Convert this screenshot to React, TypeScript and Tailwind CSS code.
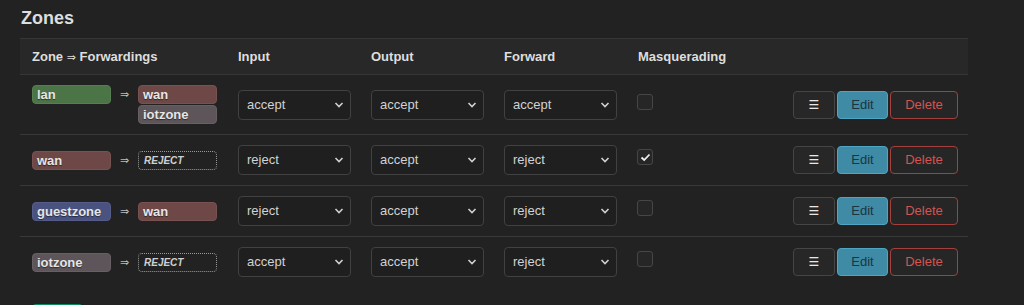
import React from 'react';

interface Zone {
  name: string;
  forwardings: string[];
  input: string;
  output: string;
  forward: string;
  masq: boolean;
}

const zones: Zone[] = [
  { name: 'lan', forwardings: ['wan', 'iotzone'], input: 'accept', output: 'accept', forward: 'accept', masq: false },
  { name: 'wan', forwardings: [], input: 'reject', output: 'accept', forward: 'reject', masq: true },
  { name: 'guestzone', forwardings: ['wan'], input: 'reject', output: 'accept', forward: 'reject', masq: false },
  { name: 'iotzone', forwardings: [], input: 'accept', output: 'accept', forward: 'reject', masq: false },
];

// zone badge colours
const badgeColors: Record<string, string> = {
  lan: 'bg-[#4b7447] border-[#557f50]',
  wan: 'bg-[#6d4846] border-[#785250]',
  guestzone: 'bg-[#4a5380] border-[#545d8a]',
  iotzone: 'bg-[#5d5559] border-[#675f63]',
};

function ZoneBadge({ name }: { name: string }) {
  return (
    <div
      className={`shrink-0 w-[79px] h-[19px] rounded-[4px] border px-[4px] text-[13px] leading-[17px] font-bold text-[#e6e6e6] [text-shadow:0_1px_1px_rgba(0,0,0,0.5)] ${badgeColors[name]}`}
    >
      {name}
    </div>
  );
}

function Select({ value }: { value: string }) {
  return (
    <div className="w-[113px] h-[30px] rounded-[4px] border border-[#414141] bg-[#1f1f1f] flex items-center justify-between pl-[8px] pr-[6px] text-[13px] text-[#d2d2d2]">
      <span>{value}</span>
      <svg width="10" height="8" viewBox="0 0 10 8" fill="none">
        <path d="M1.5 2 L5 5.5 L8.5 2" stroke="#d0d0d0" strokeWidth="1.6" />
      </svg>
    </div>
  );
}

function Checkbox({ checked }: { checked: boolean }) {
  return (
    <div className="w-[16px] h-[16px] mb-[6px] rounded-[3px] border border-[#464646] bg-[#262626] flex items-center justify-center">
      {checked && (
        <svg width="11" height="9" viewBox="0 0 11 9" fill="none">
          <path d="M1.5 4.5 L4.2 7 L9.5 1.5" stroke="#eeeeee" strokeWidth="1.8" />
        </svg>
      )}
    </div>
  );
}

export default function App() {
  return (
    <div className="h-[305px] overflow-hidden bg-[#222222] px-[20px] pt-[8px] font-['Liberation_Sans',Arial,sans-serif] text-[#d8d8d8]">
      <h2 className="text-[18px] leading-[21px] font-bold text-[#dddddd] mb-[9px] ml-[1px]">Zones</h2>

      <table className="w-[948px] table-fixed border-collapse">
        <colgroup>
          <col className="w-[206px]" />
          <col className="w-[133px]" />
          <col className="w-[133px]" />
          <col className="w-[134px]" />
          <col className="w-[150px]" />
          <col />
        </colgroup>
        <thead>
          <tr className="bg-[#282828] border-t border-b border-[#363636]">
            <th className="h-[36px] px-[12px] text-left text-[13px] font-bold text-[#dedede]">
              Zone <span className="font-['DejaVu_Sans',sans-serif] font-normal text-[11px]">⇒</span> Forwardings
            </th>
            <th className="px-[12px] text-left text-[13px] font-bold text-[#dedede]">Input</th>
            <th className="px-[12px] text-left text-[13px] font-bold text-[#dedede]">Output</th>
            <th className="px-[12px] text-left text-[13px] font-bold text-[#dedede]">Forward</th>
            <th className="px-[12px] text-left text-[13px] font-bold text-[#dedede]">Masquerading</th>
            <th></th>
          </tr>
        </thead>
        <tbody>
          {zones.map((z, i) => (
            <tr key={z.name} className={i > 0 ? 'border-t border-[#383838]' : ''}>
              <td className="pl-[12px] pr-[2px] py-[10px] align-middle">
                <div className="flex items-start">
                  <ZoneBadge name={z.name} />
                  <span className="shrink-0 w-[27px] text-center font-['DejaVu_Sans',sans-serif] text-[11px] leading-[19px] text-[#bdbdbd]">⇒</span>
                  <div className="shrink-0 flex flex-col gap-[1px]">
                    {z.forwardings.length > 0 ? (
                      z.forwardings.map((f) => <ZoneBadge key={f} name={f} />)
                    ) : (
                      <div className="w-[79px] h-[19px] rounded-[4px] border border-dotted border-[#9a9a9a] px-[5px] text-[10px] leading-[17px] font-bold italic text-[#d0d0d0]">
                        REJECT
                      </div>
                    )}
                  </div>
                </div>
              </td>
              <td className="px-[12px] py-[10px] align-middle">
                <Select value={z.input} />
              </td>
              <td className="px-[12px] py-[10px] align-middle">
                <Select value={z.output} />
              </td>
              <td className="px-[12px] py-[10px] align-middle">
                <Select value={z.forward} />
              </td>
              <td className="px-[11px] py-[10px] align-middle">
                <Checkbox checked={z.masq} />
              </td>
              <td className="pr-[10px] py-[10px] align-middle">
                <div className="flex justify-end gap-[2px] text-[13px]">
                  <button className="w-[42px] h-[28px] rounded-[4px] border border-[#454545] bg-[#272727] text-[#e8e8e8] font-['DejaVu_Sans',sans-serif] text-[12px]">
                    ☰
                  </button>
                  <button className="w-[51px] h-[28px] rounded-[4px] border border-[#4fa6c4] bg-[#3f8aa4] text-[#1c3440]">
                    Edit
                  </button>
                  <button className="w-[68px] h-[28px] rounded-[4px] border border-[#a3403d] bg-[#262626] text-[#d65350]">
                    Delete
                  </button>
                </div>
              </td>
            </tr>
          ))}
        </tbody>
      </table>

      {/* add button, mostly below the fold */}
      <div className="mt-[17px] ml-[13px] w-[49px] h-[28px] rounded-[3px] bg-[#0e8a5b]" />
    </div>
  );
}
